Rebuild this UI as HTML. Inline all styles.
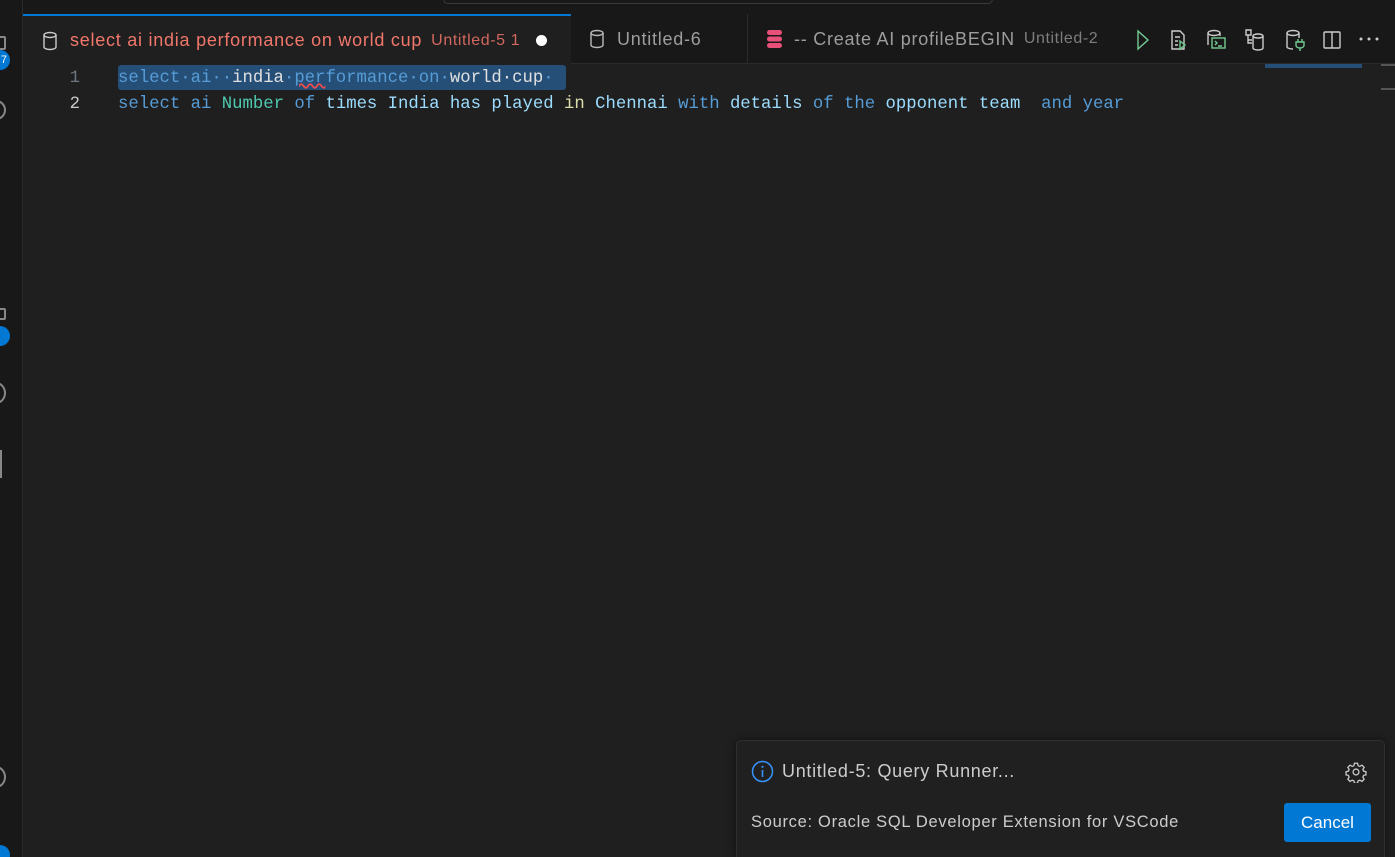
<!DOCTYPE html>
<html><head><meta charset="utf-8"><style>
*{margin:0;padding:0;box-sizing:border-box}
html{overflow:hidden;width:1395px;height:857px}
body{width:1395px;height:857px;background:#1f1f1f;overflow:hidden;position:relative;font-family:"Liberation Sans",sans-serif}
.act{position:absolute;left:0;top:0;width:23px;height:857px;background:#181818;border-right:1px solid #2b2b2b}
.top{position:absolute;left:23px;top:0;right:0;height:14px;background:#181818}
.tabs{position:absolute;left:23px;top:14px;right:0;height:50px;background:#181818;border-bottom:1px solid #2b2b2b}
.tab{position:absolute;top:0;height:50px;display:flex;align-items:center;font-size:18px;white-space:nowrap;letter-spacing:.75px}
.code{position:absolute;left:0;top:66px;font-family:"Liberation Mono",monospace;font-size:17.3px;line-height:26px}
.ln{position:absolute;left:40px;width:40px;text-align:right;color:#6e7681}
.k{color:#569cd6}.w{color:#9cdcfe}.g{color:#4ec9b0}.y{color:#dcdcaa}
.pop{position:absolute;left:736px;top:740px;width:649px;height:117px;background:#202020;border:1px solid #2f2f2f;border-bottom:none;border-radius:5px 5px 0 0;box-shadow:0 0 8px rgba(0,0,0,.5)}
</style></head><body>
<div class="act">
<div style="position:absolute;left:-6px;top:36px;width:12px;height:14px;border:2px solid #888;border-radius:2px"></div>
<div style="position:absolute;left:-10px;top:50px;width:20px;height:20px;border-radius:50%;background:#0078d4;color:#fff;font-size:11px;text-align:right;padding-right:3px;line-height:20px">7</div>
<div style="position:absolute;left:-14px;top:100px;width:20px;height:20px;border:2px solid #888;border-radius:50%"></div>
<div style="position:absolute;left:-6px;top:308px;width:12px;height:12px;border:2px solid #888;border-radius:2px"></div>
<div style="position:absolute;left:-10px;top:326px;width:20px;height:20px;border-radius:50%;background:#0078d4"></div>
<div style="position:absolute;left:-14px;top:382px;width:20px;height:22px;border:2px solid #888;border-radius:50%"></div>
<div style="position:absolute;left:0;top:450px;width:2px;height:28px;background:#888"></div>
<div style="position:absolute;left:-14px;top:766px;width:20px;height:22px;border:2px solid #888;border-radius:50%"></div>
<div style="position:absolute;left:-10px;top:845px;width:20px;height:20px;border-radius:50%;background:#0078d4"></div>
</div>
<div class="top"><div style="position:absolute;left:420px;top:-6px;width:550px;height:10px;border:1px solid #3a3a3a;border-radius:5px"></div></div>
<div class="tabs">
<div class="tab" style="left:0;width:548px;background:#1f1f1f;border-top:2px solid #0078d4;height:51px">
<svg style="margin-left:19px" width="16" height="20" viewBox="0 0 16 20"><ellipse cx="8" cy="4" rx="6" ry="2.5" fill="none" stroke="#ccc" stroke-width="1.4"/><path d="M2 4v12c0 1.4 2.7 2.5 6 2.5s6-1.1 6-2.5V4" fill="none" stroke="#ccc" stroke-width="1.4"/></svg>
<span style="color:#f1776b;margin-left:12px">select ai india performance on world cup</span>
<span style="color:#d2685e;font-size:16px;margin-left:9px;letter-spacing:.6px">Untitled-5 1</span>
<span style="width:11px;height:11px;border-radius:50%;background:#fff;margin-left:16px"></span></div>
<div class="tab" style="left:548px;width:177px;border-right:1px solid #2b2b2b">
<svg style="margin-left:18px" width="16" height="20" viewBox="0 0 16 20"><ellipse cx="8" cy="4" rx="6" ry="2.5" fill="none" stroke="#bbb" stroke-width="1.4"/><path d="M2 4v12c0 1.4 2.7 2.5 6 2.5s6-1.1 6-2.5V4" fill="none" stroke="#bbb" stroke-width="1.4"/></svg>
<span style="color:#9d9d9d;margin-left:12px">Untitled-6</span></div>
<div class="tab" style="left:725px;width:380px">
<svg style="margin-left:19px" width="15" height="18" viewBox="0 0 15 18"><rect x="0" y="0" width="15" height="5" rx="2.5" fill="#e8507a"/><rect x="0" y="6.5" width="15" height="5" rx="2.5" fill="#e8507a"/><rect x="0" y="13" width="15" height="5" rx="2.5" fill="#e8507a"/></svg>
<span style="color:#9d9d9d;margin-left:12px">-- Create AI profileBEGIN</span>
<span style="color:#7d7d7d;font-size:16px;margin-left:9px;letter-spacing:.6px">Untitled-2</span></div>
<svg style="position:absolute;left:1110px;top:14px" width="240" height="24" viewBox="0 0 240 24" fill="none" stroke-width="1.4">
<path d="M5 3l10 9-10 9z" stroke="#73c991"/>
<path d="M39 3h8l4 4v14h-12z M42 9h5 M42 13h3 M42 17h3" stroke="#ccc"/><path d="M47 13l5 4-5 4z" stroke="#73c991"/>
<ellipse cx="81" cy="5" rx="6" ry="2.5" stroke="#ccc"/><path d="M75 5v12 M87 5v3" stroke="#ccc"/><rect x="79" y="10" width="13" height="10" stroke="#73c991"/><path d="M82 13l2 2-2 2 M85 18h4" stroke="#73c991"/>
<path d="M113 2h5v5h-5z M115 7v8h4 M115 12h4" stroke="#ccc"/><ellipse cx="125" cy="8" rx="5" ry="2" stroke="#ccc"/><path d="M120 8v12c0 1 2 2 5 2s5-1 5-2V8" stroke="#ccc"/>
<ellipse cx="160" cy="5" rx="6" ry="2.5" stroke="#ccc"/><path d="M154 5v14c0 1 3 2 6 2 M166 5v5" stroke="#ccc"/><path d="M163 14h8v3c0 2-2 3-4 3s-4-1-4-3z M165 14v-3 M169 14v-3 M167 20v3" stroke="#73c991"/>
<rect x="191" y="4" width="16" height="16" rx="1" stroke="#ccc"/><path d="M199 4v16" stroke="#ccc"/>
</svg>
<svg style="position:absolute;left:1335px;top:22px" width="22" height="6" viewBox="0 0 22 6"><circle cx="3" cy="3" r="1.5" fill="#ccc"/><circle cx="11" cy="3" r="1.5" fill="#ccc"/><circle cx="19" cy="3" r="1.5" fill="#ccc"/></svg>
</div>
<div style="position:absolute;left:1265px;top:64px;width:97px;height:4px;background:#264f78"></div>
<div style="position:absolute;left:1381px;top:64px;width:14px;height:2px;background:#555"></div>
<div style="position:absolute;left:1381px;top:88px;width:14px;height:2px;background:#555"></div>
<div style="position:absolute;left:118px;top:65px;width:448px;height:25px;background:#264f78;border-radius:3px"></div>
<div class="code">
<div style="height:26px;position:relative"><span class="ln" style="color:#6e7681">1</span><span style="position:absolute;left:118px;white-space:pre"><span class="k">select·ai··</span><span style="color:#e0e0e0">india</span><span class="k">·<span style="text-decoration:underline wavy #f14c4c">per</span>formance·on·</span><span style="color:#e0e0e0">world·cup</span><span class="k">·</span></span></div>
<div style="height:26px;position:relative"><span class="ln" style="color:#ccc">2</span><span style="position:absolute;left:118px;white-space:pre"><span class="k">select ai </span><span class="g">Number</span> <span class="k">of</span> <span class="w">times India has played</span> <span class="y">in</span> <span class="w">Chennai</span> <span class="k">with</span> <span class="w">details</span> <span class="k">of the</span> <span class="w">opponent team</span>  <span class="k">and year</span></span></div>
</div>
<div class="pop">
<svg style="position:absolute;left:14px;top:19px" width="23" height="23" viewBox="0 0 23 23"><circle cx="11.5" cy="11.5" r="10" fill="none" stroke="#3794ff" stroke-width="1.5"/><path d="M11.5 10v7" stroke="#3794ff" stroke-width="1.6"/><circle cx="11.5" cy="6.8" r="1.1" fill="#3794ff"/></svg>
<div style="position:absolute;left:45px;top:20px;color:#ccc;font-size:18px;letter-spacing:.7px">Untitled-5: Query Runner...</div>
<svg style="position:absolute;left:608px;top:20px" width="22" height="22" viewBox="0 0 24 24" fill="none" stroke="#ccc" stroke-width="1.4"><circle cx="12" cy="12" r="3.2"/><path d="M10.3 2.5h3.4l.6 2.6 1.9.8 2.3-1.4 2.4 2.4-1.4 2.3.8 1.9 2.6.6v3.4l-2.6.6-.8 1.9 1.4 2.3-2.4 2.4-2.3-1.4-1.9.8-.6 2.6h-3.4l-.6-2.6-1.9-.8-2.3 1.4-2.4-2.4 1.4-2.3-.8-1.9-2.6-.6v-3.4l2.6-.6.8-1.9-1.4-2.3 2.4-2.4 2.3 1.4 1.9-.8z"/></svg>
<div style="position:absolute;left:14px;top:72px;color:#ccc;font-size:16.5px;letter-spacing:.7px">Source: Oracle SQL Developer Extension for VSCode</div>
<div style="position:absolute;left:547px;top:62px;width:87px;height:39px;background:#0078d4;border-radius:3px;color:#fff;font-size:17px;text-align:center;line-height:39px">Cancel</div>
</div>
</body></html>
